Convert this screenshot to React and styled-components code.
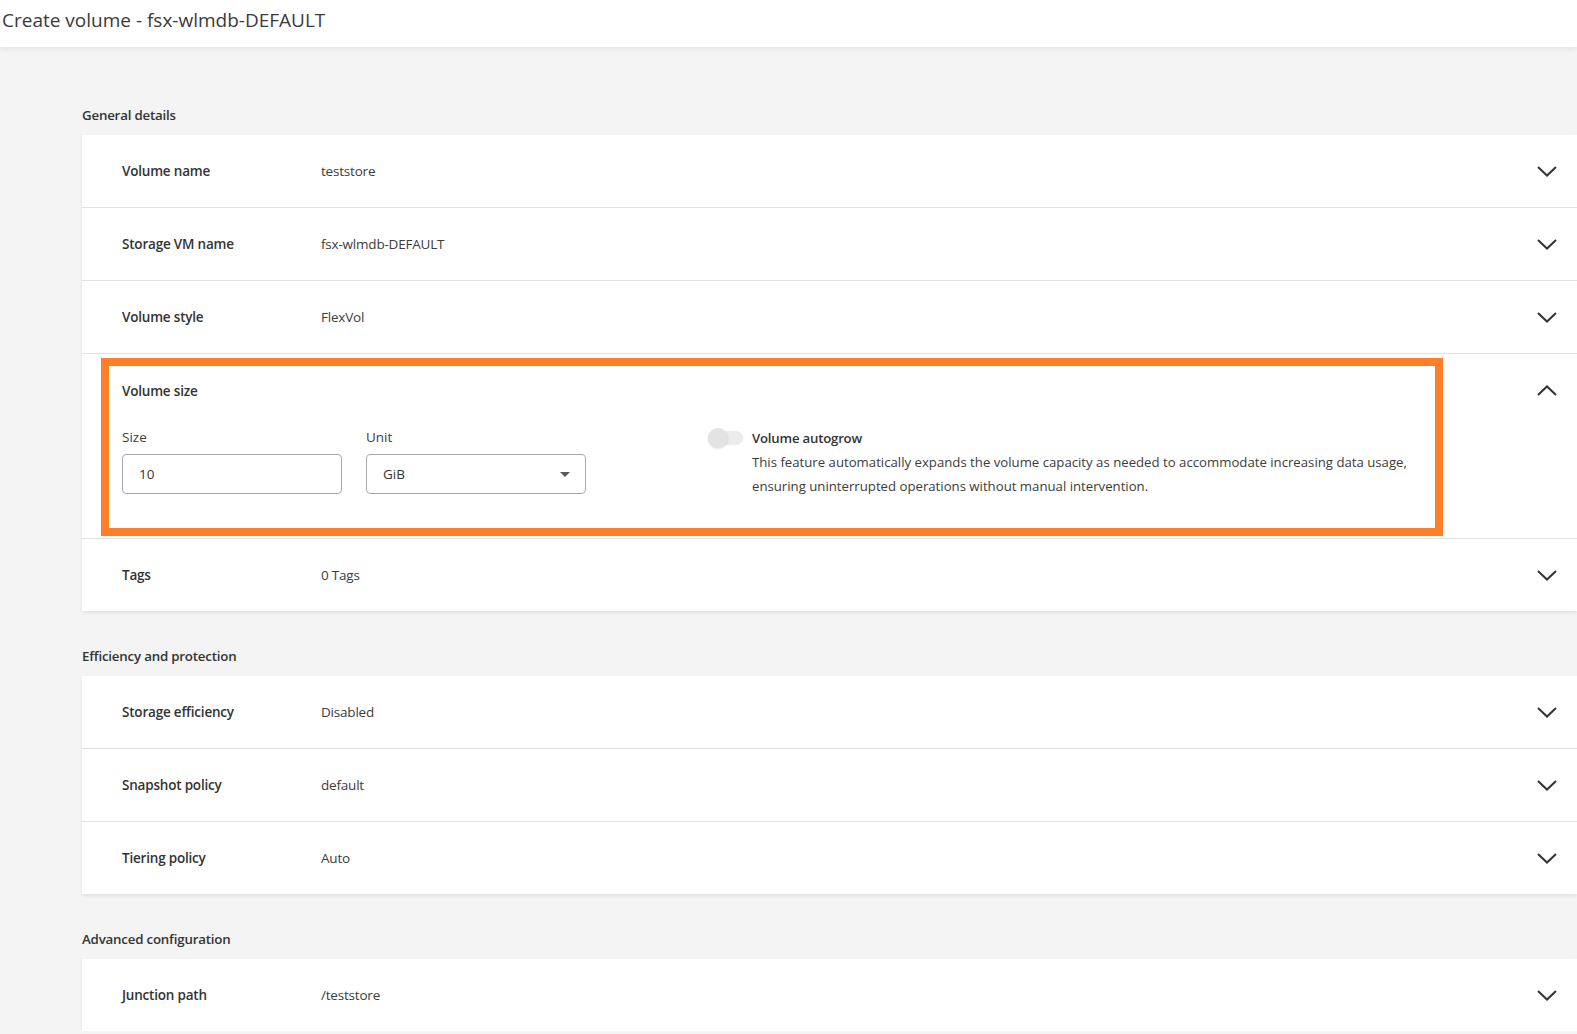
import React from 'react';
import styled, { createGlobalStyle } from 'styled-components';

const GlobalStyle = createGlobalStyle`
  html, body {
    margin: 0;
    padding: 0;
    overflow: hidden;
  }
  body {
    background: #f4f4f4;
    font-family: "Open Sans", "Noto Sans", sans-serif;
    color: #333;
  }
`;

const Header = styled.header`
  height: 47px;
  box-sizing: border-box;
  padding: 7px 0 0 2px;
  background: #fff;
  box-shadow: 0 2px 5px rgba(0, 0, 0, 0.07);
  font-size: 19px;
  line-height: 26px;
  color: #3a3a3a;
  position: relative;
  z-index: 1;
`;

const Main = styled.main`
  padding: 58px 0 0 82px;
`;

const Section = styled.section`
  & + & {
    margin-top: 35px;
  }
`;

const SectionTitle = styled.h2`
  margin: 0 0 10px;
  font-size: 13.3px;
  line-height: 20px;
  font-weight: 600;
  letter-spacing: -0.2px;
  color: #333;
`;

const Card = styled.div`
  background: #fff;
  box-shadow: 0 2px 3px rgba(0, 0, 0, 0.08);
`;

const Row = styled.div`
  position: relative;
  border-bottom: 1px solid #e2e2e2;
  &:last-child {
    border-bottom: none;
  }
`;

const RowHead = styled.div`
  display: flex;
  align-items: center;
  height: ${p => (p.$open ? '73px' : '72px')};
  padding: 0 20px 0 40px;
`;

const Label = styled.div`
  width: 199px;
  font-size: 13.5px;
  font-weight: 600;
  letter-spacing: -0.2px;
  color: #333;
`;

const Value = styled.div`
  flex: 1;
  font-size: 13.5px;
  letter-spacing: -0.2px;
  color: #3c3c3c;
`;

const Chevron = styled.svg`
  width: 20px;
  height: 11px;
  margin-left: auto;
  flex-shrink: 0;
`;

const Body = styled.div`
  display: flex;
  align-items: flex-start;
  padding: 0 40px 40px;
`;

const Field = styled.div`
  width: 220px;
  & + & {
    margin-left: 24px;
  }
`;

const FieldLabel = styled.div`
  font-size: 13.5px;
  line-height: 20px;
  color: #3c3c3c;
  margin-bottom: 7px;
`;

const Input = styled.div`
  box-sizing: border-box;
  height: 40px;
  border: 1px solid #a9a9a9;
  border-radius: 4px;
  display: flex;
  align-items: center;
  padding: 0 16px;
  font-size: 13.5px;
  color: #333;
`;

const Caret = styled.span`
  margin-left: auto;
  margin-right: -1px;
  width: 0;
  height: 0;
  border-left: 5px solid transparent;
  border-right: 5px solid transparent;
  border-top: 5px solid #5a5a5a;
`;

const Autogrow = styled.div`
  display: flex;
  align-items: flex-start;
  margin-left: 122px;
  margin-top: -1px;
`;

const Toggle = styled.div`
  position: relative;
  width: 35px;
  height: 14px;
  margin-top: 5px;
  border-radius: 7px;
  background: #ececec;
  flex-shrink: 0;
`;

const Knob = styled.span`
  position: absolute;
  left: 0;
  top: -3px;
  width: 20px;
  height: 20px;
  border-radius: 50%;
  background: #e3e3e3;
  box-shadow: 0 1px 2px rgba(0, 0, 0, 0.12);
`;

const AutogrowText = styled.div`
  margin-left: 9px;
  max-width: 665px;
  font-size: 13.2px;
  line-height: 24px;
  color: #3c3c3c;
  strong {
    display: block;
    font-weight: 600;
    letter-spacing: -0.2px;
    color: #333;
  }
`;

const Highlight = styled.div`
  position: absolute;
  left: 19px;
  top: 4px;
  width: 1342px;
  height: 178px;
  box-sizing: border-box;
  border: 8px solid #fe7f2a;
  pointer-events: none;
`;

function ChevronIcon({ up }) {
  return (
    <Chevron viewBox="0 0 20 11" fill="none">
      <path
        d={up ? 'M1 10 L10 1.5 L19 10' : 'M1 1 L10 9.5 L19 1'}
        stroke="#333"
        strokeWidth="2"
      />
    </Chevron>
  );
}

function SummaryRow({ label, value }) {
  return (
    <Row>
      <RowHead>
        <Label>{label}</Label>
        <Value>{value}</Value>
        <ChevronIcon />
      </RowHead>
    </Row>
  );
}

function VolumeSizeRow() {
  return (
    <Row>
      <RowHead $open>
        <Label>Volume size</Label>
        <ChevronIcon up />
      </RowHead>
      <Body>
        <Field>
          <FieldLabel>Size</FieldLabel>
          <Input>10</Input>
        </Field>
        <Field>
          <FieldLabel>Unit</FieldLabel>
          <Input>
            GiB
            <Caret />
          </Input>
        </Field>
        <Autogrow>
          <Toggle>
            <Knob />
          </Toggle>
          <AutogrowText>
            <strong>Volume autogrow</strong>
            This feature automatically expands the volume capacity as needed to accommodate increasing data usage,
            ensuring uninterrupted operations without manual intervention.
          </AutogrowText>
        </Autogrow>
      </Body>
      <Highlight />
    </Row>
  );
}

export default function App() {
  return (
    <>
      <GlobalStyle />
      <Header>Create volume - fsx-wlmdb-DEFAULT</Header>
      <Main>
        <Section>
          <SectionTitle>General details</SectionTitle>
          <Card>
            <SummaryRow label="Volume name" value="teststore" />
            <SummaryRow label="Storage VM name" value="fsx-wlmdb-DEFAULT" />
            <SummaryRow label="Volume style" value="FlexVol" />
            <VolumeSizeRow />
            <SummaryRow label="Tags" value="0 Tags" />
          </Card>
        </Section>
        <Section>
          <SectionTitle>Efficiency and protection</SectionTitle>
          <Card>
            <SummaryRow label="Storage efficiency" value="Disabled" />
            <SummaryRow label="Snapshot policy" value="default" />
            <SummaryRow label="Tiering policy" value="Auto" />
          </Card>
        </Section>
        <Section>
          <SectionTitle>Advanced configuration</SectionTitle>
          <Card>
            <SummaryRow label="Junction path" value="/teststore" />
          </Card>
        </Section>
      </Main>
    </>
  );
}
